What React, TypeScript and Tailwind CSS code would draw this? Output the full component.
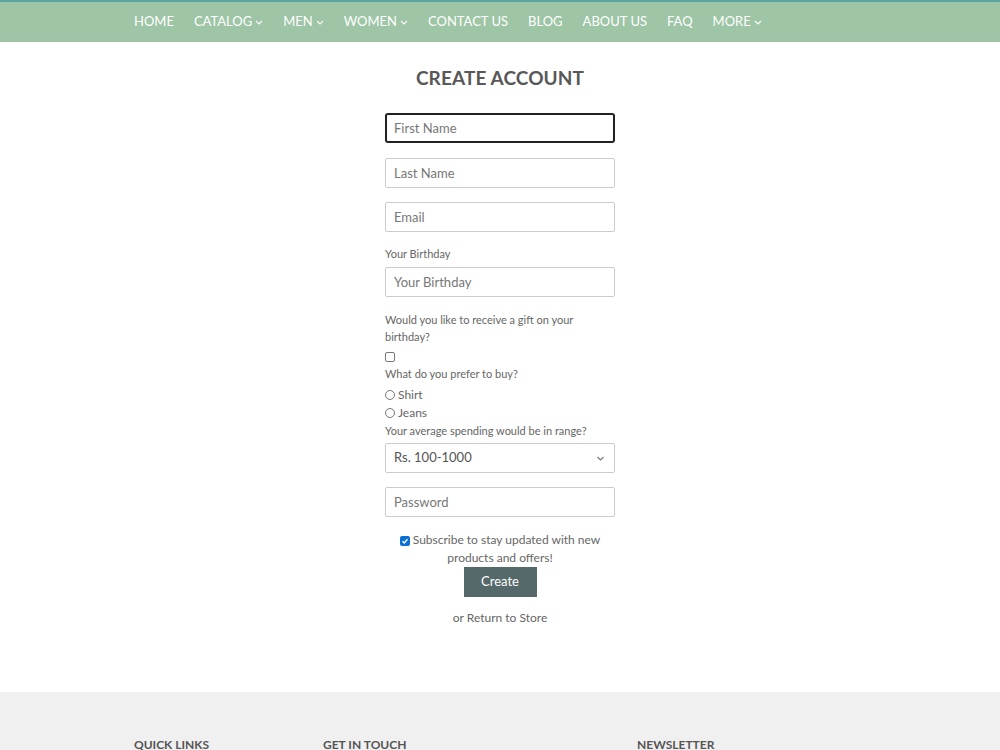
import React from "react";

const font = { fontFamily: '"Century Gothic", "Lato", "Open Sans", sans-serif' };

function Chevron({ className = "" }: { className?: string }) {
  return (
    <svg className={className} width="8" height="5" viewBox="0 0 8 5" fill="none">
      <path d="M1 1l3 3 3-3" stroke="currentColor" strokeWidth="1.1" />
    </svg>
  );
}

export default function App() {
  const nav: [string, boolean][] = [
    ["HOME", false],
    ["CATALOG", true],
    ["MEN", true],
    ["WOMEN", true],
    ["CONTACT US", false],
    ["BLOG", false],
    ["ABOUT US", false],
    ["FAQ", false],
    ["MORE", true],
  ];
  const inputCls =
    "block w-full h-[30px] border border-[#cccccc] rounded-[2px] px-[8px] text-[13px] text-[#555] placeholder:text-[#777] outline-none bg-white";
  return (
    <div className="min-h-[750px] bg-white text-[#666]" style={font}>
      <header className="h-[42px] bg-[#9dc5a6] border-t-[2px] border-[#5ba6a4] flex items-center pl-[134px] gap-[20px] text-white text-[13px]">
        {nav.map(([n, c]) => (
          <span key={n} className="flex items-center gap-[3px] whitespace-nowrap">
            {n}
            {c && <Chevron className="mt-[1px]" />}
          </span>
        ))}
      </header>

      <main className="flex flex-col items-center pt-[24px] pb-[66px]">
        <h1 className="text-[19px] font-bold text-[#585858] leading-[24px] tracking-[0.1px]">CREATE ACCOUNT</h1>
        <form className="w-[230px] mt-[23px] flex flex-col text-[11px]">
          <input
            className="block w-full h-[30px] border-[2px] border-[#222] rounded-[3px] px-[7px] text-[13px] placeholder:text-[#777] outline-none"
            placeholder="First Name"
          />
          <input className={inputCls + " mt-[15px]"} placeholder="Last Name" />
          <input className={inputCls + " mt-[14px]"} placeholder="Email" />
          <label className="mt-[13px] leading-[17px]">Your Birthday</label>
          <input className={inputCls + " mt-[5px]"} placeholder="Your Birthday" />
          <p className="mt-[14px] leading-[17px]">Would you like to receive a gift on your birthday?</p>
          <div className="mt-[5px] h-[14px] flex items-center">
            <span className="w-[10px] h-[10px] border border-[#767676] rounded-[2px] bg-white" />
          </div>
          <p className="leading-[17px] mt-[1px]">What do you prefer to buy?</p>
          <div className="mt-[4px] h-[18px] flex items-center gap-[3px] text-[12px]">
            <span className="w-[10px] h-[10px] border border-[#767676] rounded-full" />
            Shirt
          </div>
          <div className="h-[18px] flex items-center gap-[3px] text-[12px]">
            <span className="w-[10px] h-[10px] border border-[#767676] rounded-full" />
            Jeans
          </div>
          <p className="leading-[17px]">Your average spending would be in range?</p>
          <div className="mt-[4px] h-[30px] border border-[#cccccc] rounded-[2px] px-[8px] flex items-center justify-between text-[13px] text-[#555]">
            <span>Rs. 100-1000</span>
            <Chevron className="text-[#777] mr-[1px] w-[9px]" />
          </div>
          <input className={inputCls + " mt-[14px]"} placeholder="Password" />
          <div className="mt-[14px] text-center leading-[18px] text-[12px] px-[10px]">
            <span className="inline-flex align-[-1px] mr-[3px] w-[10px] h-[10px] rounded-[2px] bg-[#0b6fd6] items-center justify-center">
              <svg width="8" height="8" viewBox="0 0 8 8" fill="none">
                <path d="M1.5 4.2l1.7 1.7 3.3-3.6" stroke="white" strokeWidth="1.4" />
              </svg>
            </span>
            Subscribe to stay updated with new products and offers!
          </div>
          <div className="flex justify-center">
            <button type="button" className="w-[73px] h-[30px] bg-[#56696a] text-white text-[13px]">
              Create
            </button>
          </div>
          <p className="mt-[13px] text-center text-[12px] leading-[16px]">or Return to Store</p>
        </form>
      </main>

      <footer className="bg-[#f0f0f0] pt-[44px] h-[100px] flex pl-[134px] text-[12px] font-bold text-[#555]">
        <div className="w-[189px]">QUICK LINKS</div>
        <div className="w-[314px]">GET IN TOUCH</div>
        <div>NEWSLETTER</div>
      </footer>
    </div>
  );
}
